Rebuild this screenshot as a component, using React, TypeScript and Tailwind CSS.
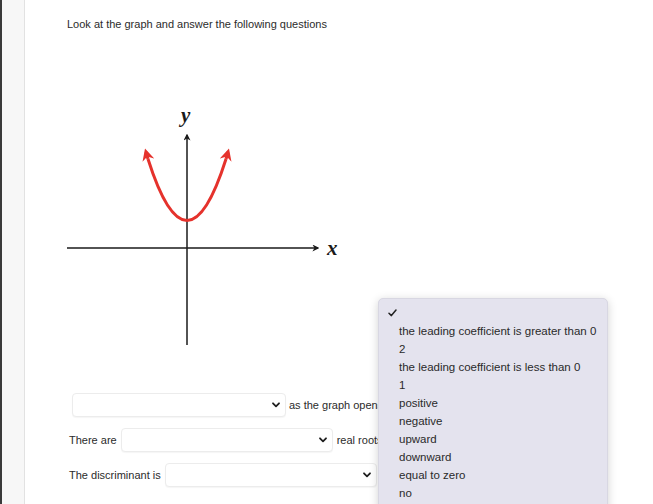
import React from 'react'

const options = [
  'the leading coefficient is greater than 0',
  '2',
  'the leading coefficient is less than 0',
  '1',
  'positive',
  'negative',
  'upward',
  'downward',
  'equal to zero',
  'no',
]

function Chevron() {
  return (
    <svg width="8" height="6" viewBox="0 0 8 6" className="shrink-0">
      <path d="M1 1.3 L4 4.3 L7 1.3" fill="none" stroke="#1f1f1f" strokeWidth="1.8" strokeLinecap="round" strokeLinejoin="round" />
    </svg>
  )
}

function FakeSelect({ width }: { width: string }) {
  return (
    <div className={`${width} h-[24px] shrink-0 flex items-center justify-end pr-[5px] bg-white border border-[#ececec] rounded-[4px] shadow-[0_1px_1px_rgba(0,0,0,0.04)]`}>
      <Chevron />
    </div>
  )
}

function Graph() {
  return (
    <svg width="290" height="260" viewBox="0 0 290 260" className="block">
      <defs>
        <marker id="blk" viewBox="0 0 10 10" refX="8" refY="5" markerWidth="7" markerHeight="7" orient="auto" markerUnits="userSpaceOnUse">
          <path d="M0 0 L10 5 L0 10 L3 5 z" fill="#1a1a1a" />
        </marker>
        <marker id="red" viewBox="0 0 10 10" refX="7" refY="5" markerWidth="12" markerHeight="12" orient="auto" markerUnits="userSpaceOnUse">
          <path d="M0 0 L10 5 L0 10 L3 5 z" fill="#e5322c" />
        </marker>
      </defs>
      {/* axes */}
      <line x1="0" y1="148" x2="251" y2="148" stroke="#1a1a1a" strokeWidth="1.5" markerEnd="url(#blk)" />
      <line x1="120" y1="245" x2="120" y2="35" stroke="#1a1a1a" strokeWidth="1.5" markerEnd="url(#blk)" />
      <text x="260" y="155" fontFamily="'Liberation Serif', serif" fontStyle="italic" fontWeight="bold" fontSize="21" fill="#1a1a1a">x</text>
      <text x="114" y="22" fontFamily="'Liberation Serif', serif" fontStyle="italic" fontWeight="bold" fontSize="21" fill="#1a1a1a">y</text>
      {/* parabola */}
      <path d="M81 59 Q120 182 159 59" fill="none" stroke="#e5322c" strokeWidth="3" />
      <path d="M81 59 L79 52" stroke="#e5322c" strokeWidth="3" markerEnd="url(#red)" />
      <path d="M159 59 L161 52" stroke="#e5322c" strokeWidth="3" markerEnd="url(#red)" />
    </svg>
  )
}

export default function App() {
  return (
    <div className="relative w-[653px] h-[504px] overflow-hidden bg-white flex font-['Liberation_Sans',Arial,sans-serif] text-[#2b2b2b]">
      {/* left window edge */}
      <div className="w-[2px] bg-[#3a3a3a] shrink-0" />
      <div className="w-[23px] bg-[#f7f7f7] border-r border-[#e2e2e2] shrink-0" />

      <div className="flex-1 pl-[42px] pt-[17px]">
        <p className="text-[11px] leading-[14px]">Look at the graph and answer the following questions</p>

        <div className="mt-[69px]">
          <Graph />
        </div>

        <div className="mt-[33px] flex flex-col gap-[11px] text-[11px]">
          <div className="flex items-center gap-[3px] pl-[5px] whitespace-nowrap">
            <FakeSelect width="w-[214px]" />
            <span>as the graph opens</span>
          </div>
          <div className="flex items-center gap-[4px] pl-[2px] whitespace-nowrap">
            <span>There are</span>
            <FakeSelect width="w-[212px]" />
            <span>real roots</span>
          </div>
          <div className="flex items-center gap-[4px] pl-[2px] whitespace-nowrap">
            <span>The discriminant is</span>
            <FakeSelect width="w-[212px]" />
          </div>
        </div>
      </div>

      {/* open dropdown menu */}
      <div className="absolute left-[378px] top-[298px] w-[230px] h-[230px] bg-[#e4e3ee] rounded-t-[5px] border border-[#d8d7e2] shadow-[0_2px_10px_rgba(0,0,0,0.18)] pt-[5px] text-[11.5px] text-[#2a2a2a]">
        <div className="h-[18px] flex items-center pl-[9px]">
          <svg width="9" height="8" viewBox="0 0 9 8">
            <path d="M1 4.3 L3.4 6.6 L8 1" fill="none" stroke="#222" strokeWidth="1.5" strokeLinecap="round" strokeLinejoin="round" />
          </svg>
        </div>
        {options.map((o) => (
          <div key={o} className="h-[18px] leading-[18px] pl-[20px] whitespace-nowrap">
            {o}
          </div>
        ))}
      </div>
    </div>
  )
}
